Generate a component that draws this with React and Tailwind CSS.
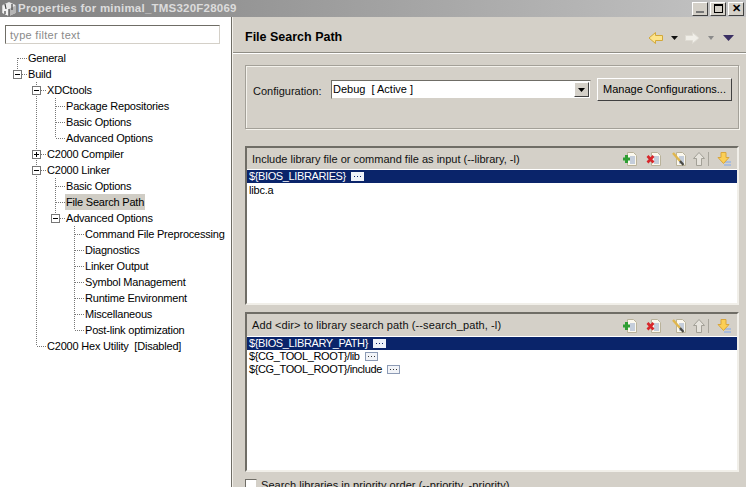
function Guide({ v, h, up, down, box }) {
  return (
    <svg width="19" height="16" className="shrink-0 block" viewBox="0 0 19 16">
      {v && <line x1="9.5" y1="0" x2="9.5" y2="16" stroke="#777" strokeDasharray="1 1" />}
      {up && <line x1="9.5" y1="0" x2="9.5" y2="8" stroke="#777" strokeDasharray="1 1" />}
      {down && <line x1="9.5" y1="8" x2="9.5" y2="16" stroke="#777" strokeDasharray="1 1" />}
      {h && <line x1={box ? 14 : 10} y1="8.5" x2="19" y2="8.5" stroke="#777" strokeDasharray="1 1" />}
      {box && (
        <g>
          <rect x="5.5" y="4.5" width="8" height="8" fill="#fff" stroke="#777" />
          <line x1="7" y1="8.5" x2="12" y2="8.5" stroke="#000" />
          {box === "plus" && <line x1="9.5" y1="6" x2="9.5" y2="11" stroke="#000" />}
        </g>
      )}
    </svg>
  );
}

function TreeRow({ guides, label, selected }) {
  return (
    <div className="flex h-4 items-center">
      {guides.map((g, i) => <Guide key={i} {...g} />)}
      <span className={"px-px h-4 leading-4 whitespace-pre tracking-[-0.2px] text-black " + (selected ? "bg-[#d0cdc5]" : "")}>{label}</span>
    </div>
  );
}

const E = {};
const V = { v: true };
const L = { up: true, h: true };
const T = { v: true, h: true };

const tree = [
  { g: [{ up: false, down: true, h: true }], t: "General" },
  { g: [{ up: true, h: true, box: "minus" }], t: "Build" },
  { g: [E, { v: true, h: true, box: "minus" }], t: "XDCtools" },
  { g: [E, V, T], t: "Package Repositories" },
  { g: [E, V, T], t: "Basic Options" },
  { g: [E, V, L], t: "Advanced Options" },
  { g: [E, { v: true, h: true, box: "plus" }], t: "C2000 Compiler" },
  { g: [E, { v: true, h: true, box: "minus" }], t: "C2000 Linker" },
  { g: [E, V, T], t: "Basic Options" },
  { g: [E, V, T], t: "File Search Path", selected: true },
  { g: [E, V, { up: true, h: true, box: "minus" }], t: "Advanced Options" },
  { g: [E, V, E, T], t: "Command File Preprocessing" },
  { g: [E, V, E, T], t: "Diagnostics" },
  { g: [E, V, E, T], t: "Linker Output" },
  { g: [E, V, E, T], t: "Symbol Management" },
  { g: [E, V, E, T], t: "Runtime Environment" },
  { g: [E, V, E, T], t: "Miscellaneous" },
  { g: [E, V, E, L], t: "Post-link optimization" },
  { g: [E, L], t: "C2000 Hex Utility  [Disabled]" },
];

function Cube() {
  return (
    <svg width="16" height="16" viewBox="0 0 16 16" className="shrink-0">
      <path d="M8 1 L14.5 4 L14.5 12 L8 15 L1.5 12 L1.5 4 Z" fill="#e8e8e8" />
      <path d="M8 8 L14.5 4.5 L14.5 12 L8 15 Z" fill="#b5b5b5" />
      <path d="M8 8 L1.5 4.5 L1.5 12 L8 15 Z" fill="#f4f4f4" />
      <path d="M4 3 L5 8 M11 3 L11 9 M8 8 L8 15 M4 10 L4 13" stroke="#444" strokeWidth="1.2" fill="none" />
    </svg>
  );
}

function WinBtn({ children }) {
  return (
    <div className="w-4 h-[14px] bg-[#d4d0c8] border border-t-white border-l-white border-r-[#404040] border-b-[#404040] flex items-center justify-center">
      {children}
    </div>
  );
}

function DocIcon({ kind }) {
  return (
    <svg width="16" height="16" viewBox="0 0 16 16" className="shrink-0">
      <path d="M5.5 1.5 H11.5 L14.5 4.5 V14.5 H5.5 Z" fill="#fbf8ee" stroke="#b9b29a" />
      <path d="M8 6 H13 M8 8 H13 M8 10 H13 M8 12 H13" stroke="#8ea3c8" />
      {kind === "add" && <path d="M4.5 4 V12 M1 8 H8" stroke="#2f9e34" strokeWidth="3" />}
      {kind === "del" && <path d="M1.5 5 L7.5 11.5 M7.5 5 L1.5 11.5" stroke="#d7262b" strokeWidth="2.6" />}
      {kind === "edit" && (
        <g>
          <path d="M2 2 L9 10" stroke="#e0b64c" strokeWidth="2.4" />
          <path d="M9 10 L12.5 14" stroke="#4a4a44" strokeWidth="2.2" />
        </g>
      )}
    </svg>
  );
}

function UpArrow() {
  return (
    <svg width="14" height="16" viewBox="0 0 14 16" className="shrink-0">
      <path d="M7 1.5 L12.5 7.5 H9.5 V14.5 H4.5 V7.5 H1.5 Z" fill="#e6e3dc" stroke="#a3a097" />
    </svg>
  );
}

function DownIcon() {
  return (
    <svg width="16" height="16" viewBox="0 0 16 16" className="shrink-0">
      <path d="M8 13 H15 V15 H8 Z M9 10 H15 V12 H9 Z" fill="#a9bcdc" />
      <path d="M5 1.5 H10 V6.5 H13 L7.5 12.5 L2 6.5 H5 Z" fill="#fbcf55" stroke="#d9a63c" />
    </svg>
  );
}

function Toolbar() {
  return (
    <div className="flex items-center">
      <DocIcon kind="add" />
      <div className="w-[8px]" />
      <DocIcon kind="del" />
      <div className="w-[9px]" />
      <DocIcon kind="edit" />
      <div className="w-[5px]" />
      <UpArrow />
      <div className="ml-[2px] mr-[7px] w-px h-[14px] bg-[#a8a59c]" />
      <DownIcon />
    </div>
  );
}

function More({ light }) {
  return (
    <span className={"inline-flex items-center justify-center w-[13px] h-[9px] ml-[5px] border " + (light ? "bg-[#eef2f8] border-[#eef2f8] text-[#0a246a]" : "bg-[#f2f4f8] border-[#8d9bb5] text-[#333]")}>
      <svg width="9" height="3" viewBox="0 0 9 3"><path d="M1 1h1v1H1zM4 1h1v1H4zM7 1h1v1H7z" fill="currentColor" /></svg>
    </span>
  );
}

function ListRow({ children, selected }) {
  return (
    <div className={"h-[13px] leading-[13px] pl-[2px] flex items-center whitespace-pre " + (selected ? "bg-[#0a246a] text-white" : "text-black")}>
      <span className="tracking-[-0.38px]">{children}</span>
      <More light={selected} />
    </div>
  );
}

function Group({ title, className, titleClass, headerClass, children }) {
  return (
    <div className={"mr-[7px] border-2 border-t-[#6f6d66] border-l-[#6f6d66] border-r-[#f1efe9] border-b-[#f1efe9] flex flex-col " + className}>
      <div className={"shrink-0 flex items-center justify-between pl-[5px] pr-[5px] pt-[1px] " + headerClass}>
        <span className={"whitespace-pre text-[#111] " + titleClass}>{title}</span>
        <Toolbar />
      </div>
      <div className="flex-1 bg-white pt-px">{children}</div>
    </div>
  );
}

export default function App() {
  return (
    <div className="w-[746px] h-[487px] overflow-hidden flex flex-col bg-[#d4d0c8] text-[11px] text-black" style={{ fontFamily: '"Liberation Sans", Arial, sans-serif' }}>
      <div className="h-[17px] shrink-0 flex items-center bg-gradient-to-r from-[#808080] to-[#c4c4c4] pl-px pr-[2px]">
        <Cube />
        <span className="ml-px text-[11.5px] tracking-[0.22px] font-bold text-[#dcdcdc] whitespace-pre">Properties for minimal_TMS320F28069</span>
        <div className="ml-auto flex gap-0">
          <WinBtn><div className="w-[8px] h-[2px] bg-[#777] mt-[7px]" /></WinBtn>
          <div className="w-[2px]" />
          <WinBtn><div className="w-[9px] h-[9px] border border-black border-t-2" /></WinBtn>
          <div className="w-[2px]" />
          <WinBtn><span className="text-[11px] leading-none font-bold">✕</span></WinBtn>
        </div>
      </div>
      <div className="flex-1 flex min-h-0">
        <div className="w-[232px] shrink-0 bg-white border-r border-r-[#6f6d66] flex flex-col">
          <div className="mt-[8px] ml-[5px] w-[215px] h-[19px] border border-t-[#6f6d66] border-l-[#6f6d66] border-r-[#d4d0c8] border-b-[#d4d0c8] flex items-center pl-[4px] pt-[2px] text-[#8a8a8a] tracking-[0.3px]">
            type filter text
          </div>
          <div className="mt-[6px] pl-[8px]">
            {tree.map((r, i) => <TreeRow key={i} guides={r.g} label={r.t} selected={r.selected} />)}
          </div>
        </div>
        <div className="flex-1 min-w-0 flex flex-col border-l border-l-[#f4f2ec]">
          <div className="h-[36px] shrink-0 border-b border-b-[#8f8d85] shadow-[0_1px_0_#fff] flex items-center justify-between pl-[12px] pr-[12px] pt-[6px]">
            <span className="text-[12.5px] font-bold text-black">File Search Path</span>
            <div className="flex items-center">
              <svg width="16" height="14" viewBox="0 0 16 14"><path d="M1 7 L7.5 1.5 V4.5 H14.5 V9.5 H7.5 V12.5 Z" fill="#fde48a" stroke="#d2a83a" /></svg>
              <svg width="7" height="4" viewBox="0 0 7 4" className="ml-[7px]"><path d="M0 0 H7 L3.5 4 Z" fill="#111" /></svg>
              <svg width="16" height="14" viewBox="0 0 16 14" className="ml-[6px]"><path d="M15 7 L8.5 1.5 V4.5 H1.5 V9.5 H8.5 V12.5 Z" fill="#f0eee8" stroke="#dedbd3" /></svg>
              <svg width="6" height="4" viewBox="0 0 6 4" className="ml-[8px]"><path d="M0 0 H6 L3 4 Z" fill="#8a8a8a" /></svg>
              <svg width="11" height="6" viewBox="0 0 11 6" className="ml-[9px]"><path d="M0 0 H11 L5.5 6 Z" fill="#3a2f63" /></svg>
            </div>
          </div>
          <div className="pl-[12px] pt-[12px] flex flex-col">
            <div className="mr-[7px] h-[64px] border border-[#a3a098] shadow-[inset_1px_1px_0_#f4f2ec,1px_1px_0_#f4f2ec] flex pt-[13px] pl-[7px] items-start">
              <span className="w-[78px] mt-[4px] text-[#111]">Configuration:</span>
              <div className="mt-px w-[260px] h-[19px] bg-white border border-t-[#6f6d66] border-l-[#6f6d66] border-r-[#d4d0c8] border-b-[#d4d0c8] flex items-center justify-between pl-px pr-px whitespace-pre">
                <span>Debug  [ Active ]</span>
                <div className="w-[15px] h-[15px] bg-[#d4d0c8] border border-t-white border-l-white border-r-[#404040] border-b-[#404040] flex items-center justify-center">
                  <svg width="7" height="4" viewBox="0 0 7 4"><path d="M0 0 H7 L3.5 4 Z" fill="#000" /></svg>
                </div>
              </div>
              <div className="ml-[6px] -mt-px w-[135px] h-[23px] bg-[#d4d0c8] border border-t-white border-l-white border-r-[#404040] border-b-[#404040] flex items-center justify-center whitespace-pre">
                Manage Configurations...
              </div>
            </div>
            <Group title="Include library file or command file as input (--library, -l)" headerClass="h-[21px]" className="mt-[17px] h-[159px]">
              <ListRow selected>{"${BIOS_LIBRARIES}"}</ListRow>
              <div className="h-[14px] leading-[13px] pt-px pl-[2px] tracking-[-0.2px]">libc.a</div>
            </Group>
            <Group title="Add <dir> to library search path (--search_path, -l)" headerClass="h-[22px]" titleClass="tracking-[0.1px]" className="mt-[7px] h-[160px]">
              <ListRow selected>{"${BIOS_LIBRARY_PATH}"}</ListRow>
              <ListRow>{"${CG_TOOL_ROOT}/lib"}</ListRow>
              <ListRow>{"${CG_TOOL_ROOT}/include"}</ListRow>
            </Group>
            <div className="mt-[3px] flex items-center whitespace-pre h-[13px]">
              <div className="w-[12px] h-[12px] mt-[7px] bg-white border border-t-[#6f6d66] border-l-[#6f6d66] border-r-[#d4d0c8] border-b-[#d4d0c8] shrink-0" />
              <span className="ml-[4px] mt-[7px] text-[#111] tracking-[0.05px]">Search libraries in priority order (--priority, -priority)</span>
            </div>
          </div>
        </div>
      </div>
    </div>
  );
}
